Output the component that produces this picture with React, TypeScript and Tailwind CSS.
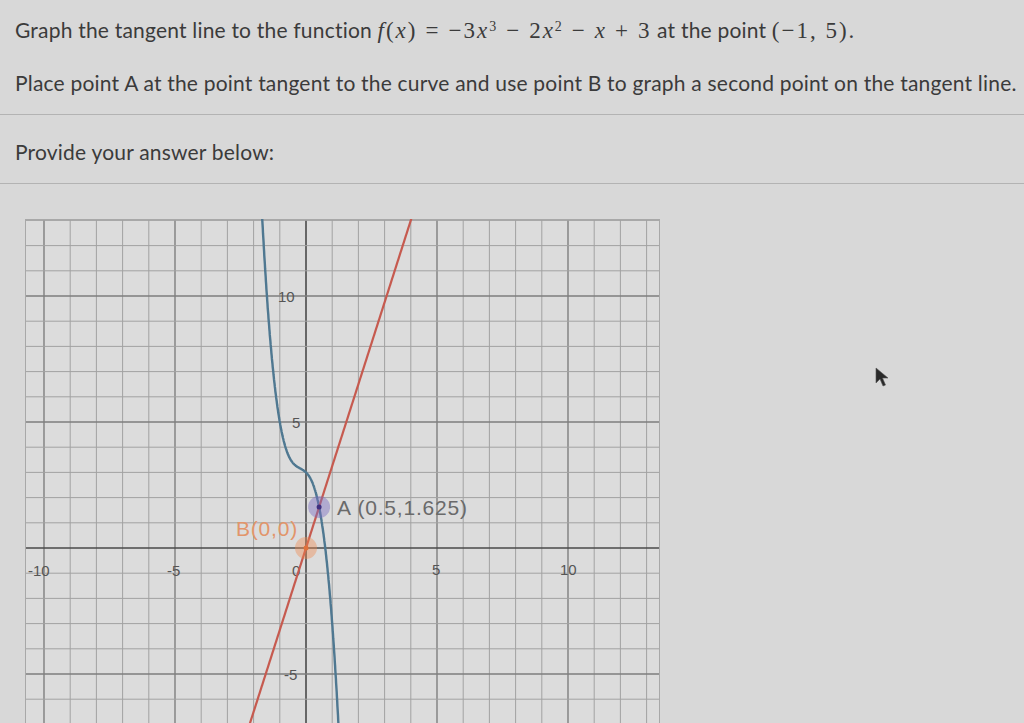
import React from "react";

const SX = 26.2;
const SY = 25.2;
const OX = 281; // x=0 inside svg
const OY = 329; // y=0 inside svg
const W = 635;
const H = 510;

const px = (x: number) => OX + x * SX;
const py = (y: number) => OY - y * SY;

const f = (x: number) => -3 * x ** 3 - 2 * x ** 2 - x + 3;

function curvePath() {
  const pts: string[] = [];
  for (let x = -1.75; x <= 1.35; x += 0.01) {
    pts.push(`${px(x).toFixed(1)},${py(f(x)).toFixed(1)}`);
  }
  return "M" + pts.join(" L");
}

function Graph() {
  const xs: number[] = [];
  for (let i = -10; i <= 13; i++) xs.push(i);
  const ys: number[] = [];
  for (let j = -7; j <= 13; j++) ys.push(j);

  return (
    <svg width={W} height={H} viewBox={`0 0 ${W} ${H}`} className="block">
      <rect x={0} y={0} width={W} height={H} fill="#dcdcdc" />
      {xs.map((i) => (
        <line
          key={"v" + i}
          x1={px(i)}
          x2={px(i)}
          y1={0}
          y2={H}
          stroke={i === 0 ? "#4a4a4a" : i % 5 === 0 ? "#7e7e7e" : "#a2a2a2"}
          strokeWidth={i === 0 ? 1.6 : i % 5 === 0 ? 1.4 : 1}
        />
      ))}
      {ys.map((j) => (
        <line
          key={"h" + j}
          x1={0}
          x2={W}
          y1={py(j)}
          y2={py(j)}
          stroke={j === 0 ? "#4a4a4a" : j % 5 === 0 ? "#7e7e7e" : "#a2a2a2"}
          strokeWidth={j === 0 ? 1.6 : j % 5 === 0 ? 1.4 : 1}
        />
      ))}
      <rect x={0.5} y={0.5} width={W - 1} height={H} fill="none" stroke="#a8a8a8" />

      {/* axis labels */}
      <g fontFamily="'Liberation Sans', Arial, sans-serif" fontSize={15} fill="#555">
        <text x={px(-10) - 16} y={OY + 28}>-10</text>
        <text x={px(-5) - 8} y={OY + 28}>-5</text>
        <text x={px(0) - 14} y={OY + 28}>0</text>
        <text x={px(5) - 5} y={OY + 27}>5</text>
        <text x={px(10) - 8} y={OY + 27}>10</text>
        <text x={OX - 28} y={py(10) + 6}>10</text>
        <text x={OX - 14} y={py(5) + 6}>5</text>
        <text x={OX - 22} y={py(-5) + 6}>-5</text>
      </g>

      {/* function */}
      <path d={curvePath()} fill="none" stroke="#4f7891" strokeWidth={2.4} />
      {/* tangent line through B(0,0) and A(0.5,1.625) */}
      <line
        x1={px(-2.2)}
        y1={py(-2.2 * 3.25)}
        x2={px(4.05)}
        y2={py(4.05 * 3.25)}
        stroke="#c65a4f"
        strokeWidth={2.2}
      />

      {/* points */}
      <circle cx={px(0)} cy={py(0)} r={11} fill="#f0884a" opacity={0.4} />
      <circle cx={px(0)} cy={py(0)} r={2.5} fill="#e0703a" />
      <circle cx={px(0.5)} cy={py(1.625)} r={11} fill="#7a6cc0" opacity={0.45} />
      <circle cx={px(0.5)} cy={py(1.625)} r={2.5} fill="#3e2f80" />

      <g fontFamily="'Liberation Sans', Arial, sans-serif" fontSize={21} letterSpacing={0.8}>
        <text x={px(0.5) + 18} y={py(1.625) + 8} fill="#6a6a6a">A (0.5,1.625)</text>
        <text x={px(0) - 70} y={py(0) - 12} fill="#e2956a">B(0,0)</text>
      </g>
    </svg>
  );
}

function Cursor() {
  return (
    <svg
      width="16"
      height="22"
      viewBox="0 0 16 22"
      className="absolute left-[874px] top-[366px]"
    >
      <path d="M2 2 L2 17 L6 13 L9 20 L11.5 19 L8.5 12 L14 12 Z" fill="#2a2a2a" stroke="#555" strokeWidth="0.6" />
    </svg>
  );
}

const serif = "font-['Liberation_Serif','Times_New_Roman',serif] text-[23px] tracking-[2px]";
const op = "mx-[8px]";

export default function App() {
  return (
    <div className="relative w-[1024px] h-[723px] overflow-hidden bg-[#d8d8d8] text-[#3b3b3b] font-['Lato','Open_Sans',sans-serif]">
      <div className="px-[15px] pt-[17px]">
        <p className="text-[21px] leading-[26px] tracking-[0.2px] whitespace-nowrap">
          Graph the tangent line to the function{" "}
          <span className={serif}>
            <i>f</i>(<i>x</i>)<span className={op}>=</span>−3<i>x</i>
            <sup className="text-[14px]">3</sup>
            <span className={op}>−</span>2<i>x</i>
            <sup className="text-[14px]">2</sup>
            <span className={op}>−</span>
            <i>x</i>
            <span className={op}>+</span>3
          </span>{" "}
          at the point <span className={serif}>(−1,&nbsp;5).</span>
        </p>
        <p className="mt-[26px] text-[21px] leading-[26px] tracking-[0.2px] whitespace-nowrap">
          Place point A at the point tangent to the curve and use point B to graph a second point on the tangent line.
        </p>
      </div>
      <div className="mt-[18px] border-t border-[#b3b3b3]" />
      <p className="px-[15px] pt-[24px] pb-[18px] text-[21px] leading-[26px] tracking-[0.2px]">Provide your answer below:</p>
      <div className="border-t border-[#b3b3b3]" />
      <div className="pl-[25px] pt-[35px]">
        <Graph />
      </div>
      <Cursor />
    </div>
  );
}
